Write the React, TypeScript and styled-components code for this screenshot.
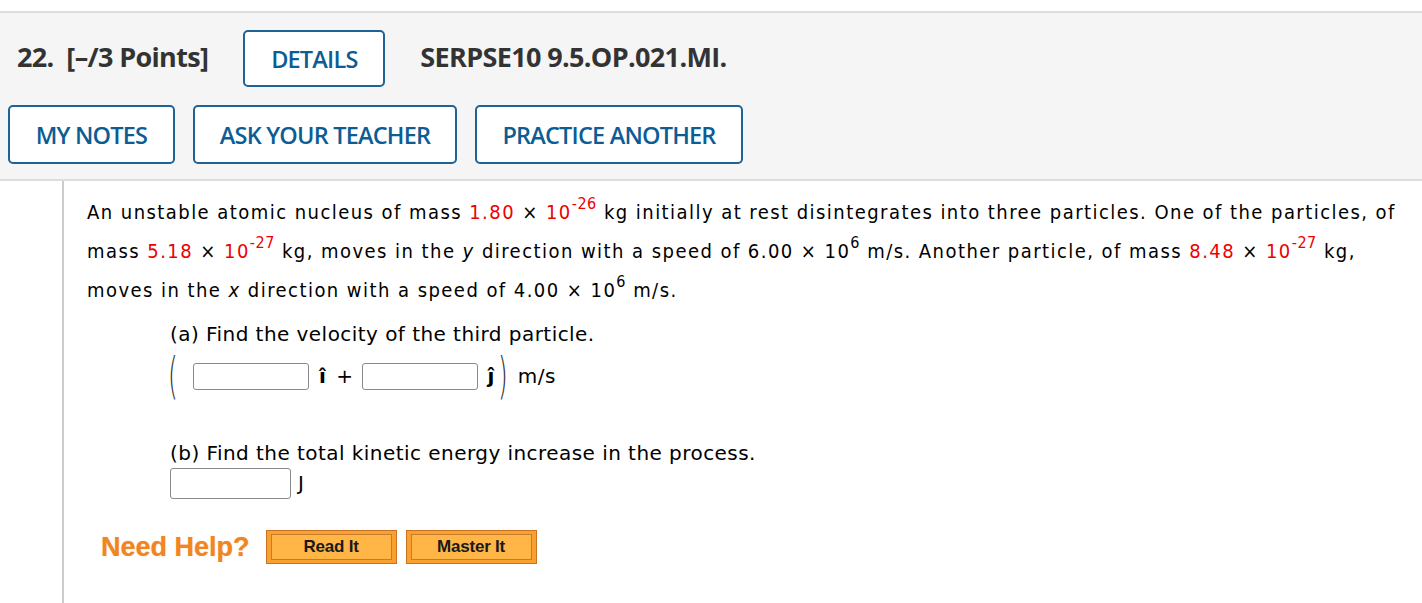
import React from "react";
import styled, { createGlobalStyle } from "styled-components";

const Global = createGlobalStyle`
  html, body { margin: 0; padding: 0; background: #fff; }
  body { font-family: "DejaVu Sans", Verdana, sans-serif; }
`;

const Page = styled.div`
  padding-top: 11px;
  width: 1422px;
  height: 603px;
  overflow: hidden;
  box-sizing: border-box;
`;

const Header = styled.div`
  background: #f5f5f5;
  border-top: 2px solid #dddddd;
  border-bottom: 2px solid #dddddd;
  padding: 17px 0 15px 8px;
  display: flex;
  flex-direction: column;
  gap: 18px;
`;

const Row = styled.div<{ $gap: number }>`
  display: flex;
  align-items: center;
  gap: ${(p) => p.$gap}px;
`;

const Title = styled.div<{ $pl?: number }>`
  font-family: "Open Sans", sans-serif;
  font-weight: 700;
  font-size: 27px;
  line-height: 34px;
  color: #333333;
  letter-spacing: -0.65px;
  padding-left: ${(p) => p.$pl ?? 0}px;
  padding-bottom: 3px;
  white-space: pre;
`;

const OutlineButton = styled.button<{ $w: number; $h: number }>`
  width: ${(p) => p.$w}px;
  height: ${(p) => p.$h}px;
  box-sizing: border-box;
  border: 2px solid #1f6396;
  border-radius: 5px;
  background: #fff;
  color: #0b5d94;
  font-family: "Open Sans", sans-serif;
  font-weight: 600;
  font-size: 23.5px;
  letter-spacing: -0.8px;
  padding: 0;
  cursor: pointer;
`;

const Body = styled.div`
  display: flex;
`;

const Gutter = styled.div`
  width: 62px;
  border-right: 2px solid #cccccc;
  height: 425px;
  flex: none;
`;

const Content = styled.div`
  padding: 12px 0 0 23px;
  flex: 1;
`;

const Para = styled.p`
  margin: 0;
  font-family: "DejaVu Sans Condensed", "DejaVu Sans", sans-serif;
  font-size: 20px;
  line-height: 39px;
  color: #000;
  letter-spacing: 1.45px;
  white-space: nowrap;
`;

const Red = styled.span`
  color: #ee0000;
`;

const Sup = styled.sup`
  font-size: 16px;
  line-height: 0;
  vertical-align: 10px;
  letter-spacing: 0.5px;
`;

const Part = styled.div`
  margin-left: 83px;
  font-family: "DejaVu Sans", Verdana, sans-serif;
  font-size: 20px;
  letter-spacing: 0.45px;
  color: #000;
`;

const PartLabel = styled.div<{ $pt: number }>`
  line-height: 24px;
  padding-top: ${(p) => p.$pt}px;
`;

const AnswerRow = styled.div<{ $h: number; $mt: number }>`
  display: flex;
  align-items: center;
  height: ${(p) => p.$h}px;
  margin-top: ${(p) => p.$mt}px;
`;

const Paren = styled.span<{ $m: string }>`
  font-family: "DejaVu Sans", sans-serif;
  font-weight: 200;
  font-size: 50px;
  color: #333;
  line-height: 1;
  transform: scaleX(0.5);
  display: inline-block;
  margin: ${(p) => p.$m};
`;

const Input = styled.input<{ $w: number; $h: number; $ml?: number }>`
  width: ${(p) => p.$w}px;
  height: ${(p) => p.$h}px;
  box-sizing: border-box;
  border: 1.5px solid #8a8a8a;
  border-radius: 3px;
  background: #fff;
  padding: 0;
  margin: 0 0 0 ${(p) => p.$ml ?? 0}px;
`;

const Unit = styled.span<{ $ml: number; $bold?: boolean }>`
  margin-left: ${(p) => p.$ml}px;
  font-weight: ${(p) => (p.$bold ? 700 : 400)};
`;

const Help = styled.div`
  display: flex;
  align-items: center;
  margin: 29px 0 0 14px;
`;

const NeedHelp = styled.span`
  font-family: "Liberation Sans", Arial, sans-serif;
  font-weight: 700;
  font-size: 27px;
  color: #f08522;
  text-shadow: 0 0 1px rgba(240, 133, 34, 0.6);
  margin-right: 16px;
`;

const HelpButton = styled.button`
  width: 131px;
  height: 34px;
  box-sizing: border-box;
  border: 1px solid #c9731f;
  background: #f8a032;
  padding: 3px 4px;
  margin-right: 9px;
  cursor: pointer;
  display: flex;
`;

const HelpInner = styled.span`
  flex: 1;
  border: 1px solid #c77a2c;
  background: #ffb646;
  display: flex;
  align-items: center;
  justify-content: center;
  font-family: "Liberation Sans", Arial, sans-serif;
  font-weight: 700;
  font-size: 17px;
  color: #1a1a1a;
  letter-spacing: -0.2px;
`;

export default function App() {
  return (
    <>
      <Global />
      <Page>
        <Header>
          <Row $gap={35}>
            <Title $pl={9}>22.  [–/3 Points]</Title>
            <OutlineButton $w={142} $h={57}>DETAILS</OutlineButton>
            <Title>SERPSE10 9.5.OP.021.MI.</Title>
          </Row>
          <Row $gap={18}>
            <OutlineButton $w={167} $h={59}>MY NOTES</OutlineButton>
            <OutlineButton $w={264} $h={59}>ASK YOUR TEACHER</OutlineButton>
            <OutlineButton $w={268} $h={59}>PRACTICE ANOTHER</OutlineButton>
          </Row>
        </Header>
        <Body>
          <Gutter />
          <Content>
            <Para>
              An unstable atomic nucleus of mass <Red>1.80</Red> × <Red>10<Sup>-26</Sup></Red> kg
              initially at rest disintegrates into three particles. One of the particles, of
              <br />
              mass <Red>5.18</Red> × <Red>10<Sup>-27</Sup></Red> kg, moves in the <i>y</i> direction
              with a speed of 6.00 × 10<Sup>6</Sup> m/s. Another particle, of mass <Red>8.48</Red> ×{" "}
              <Red>10<Sup>-27</Sup></Red> kg,
              <br />
              moves in the <i>x</i> direction with a speed of 4.00 × 10<Sup>6</Sup> m/s.
            </Para>
            <Part>
              <PartLabel $pt={12}>(a) Find the velocity of the third particle.</PartLabel>
              <AnswerRow $h={44} $mt={8}>
                <Paren $m="0 10px 0 -7px">(</Paren>
                <Input $w={116} $h={27} />
                <Unit $ml={10} $bold>î</Unit>
                <Unit $ml={10}>+</Unit>
                <Input $w={116} $h={27} $ml={8} />
                <Unit $ml={10} $bold>ĵ</Unit>
                <Paren $m="0 0 0 -2px">)</Paren>
                <Unit $ml={5}>m/s</Unit>
              </AnswerRow>
              <PartLabel $pt={43}>(b) Find the total kinetic energy increase in the process.</PartLabel>
              <AnswerRow $h={36} $mt={0}>
                <Input $w={121} $h={31} />
                <Unit $ml={7}>J</Unit>
              </AnswerRow>
            </Part>
            <Help>
              <NeedHelp>Need Help?</NeedHelp>
              <HelpButton>
                <HelpInner>Read It</HelpInner>
              </HelpButton>
              <HelpButton>
                <HelpInner>Master It</HelpInner>
              </HelpButton>
            </Help>
          </Content>
        </Body>
      </Page>
    </>
  );
}
